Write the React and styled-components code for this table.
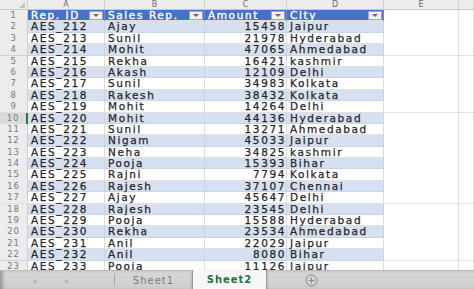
import React from "react";
import styled, { createGlobalStyle } from "styled-components";

const Global = createGlobalStyle`
  html, body { margin: 0; padding: 0; background: #fff; overflow: hidden; }
  * { box-sizing: border-box; }
`;

const rows = [
  ["AES_212", "Ajay", "15458", "Jaipur"],
  ["AES_213", "Sunil", "21978", "Hyderabad"],
  ["AES_214", "Mohit", "47065", "Ahmedabad"],
  ["AES_215", "Rekha", "16421", "kashmir"],
  ["AES_216", "Akash", "12109", "Delhi"],
  ["AES_217", "Sunil", "34983", "Kolkata"],
  ["AES_218", "Rakesh", "38432", "Kolkata"],
  ["AES_219", "Mohit", "14264", "Delhi"],
  ["AES_220", "Mohit", "44136", "Hyderabad"],
  ["AES_221", "Sunil", "13271", "Ahmedabad"],
  ["AES_222", "Nigam", "45033", "Jaipur"],
  ["AES_223", "Neha", "34825", "kashmir"],
  ["AES_224", "Pooja", "15393", "Bihar"],
  ["AES_225", "Rajni", "7794", "Kolkata"],
  ["AES_226", "Rajesh", "37107", "Chennai"],
  ["AES_227", "Ajay", "45647", "Delhi"],
  ["AES_228", "Rajesh", "23545", "Delhi"],
  ["AES_229", "Pooja", "15588", "Hyderabad"],
  ["AES_230", "Rekha", "23534", "Ahmedabad"],
  ["AES_231", "Anil", "22029", "Jaipur"],
  ["AES_232", "Anil", "8080", "Bihar"],
  ["AES_233", "Pooja", "11126", "Jaipur"],
];

const COLS = "28px 77px 100px 82px 97px 75px 1fr";

const Screen = styled.div`
  width: 474px;
  height: 289px;
  display: flex;
  flex-direction: column;
  font-family: "DejaVu Sans", "Liberation Sans", sans-serif;
  overflow: hidden;
`;

const Sheet = styled.div`
  flex: 1;
  overflow: hidden;
`;

const HeaderBar = styled.div`
  display: grid;
  grid-template-columns: ${COLS};
  height: 10px;
  background: #ececec;
  border-bottom: 1px solid #c8c8c8;
`;

const Corner = styled.div`
  border-right: 1px solid #cfcfcf;
  position: relative;
  &::after {
    content: "";
    position: absolute;
    right: 2px;
    bottom: 1px;
    border-left: 6px solid transparent;
    border-bottom: 6px solid #c4c4c4;
  }
`;

const ColHead = styled.div`
  border-right: 1px solid #d2d2d2;
  color: #6a6a6a;
  font-size: 8px;
  line-height: 9px;
  text-align: center;
`;

const Row = styled.div`
  display: grid;
  grid-template-columns: ${COLS};
  height: 11.4px;
  background: ${(p) => (p.$head ? "#4472c4" : p.$band ? "#d6e0f0" : "#fff")};
  border-bottom: 1px solid ${(p) => (p.$band ? "#c9d4e8" : "#e0e0e0")};
`;

const RowHead = styled.div`
  background: ${(p) => (p.$active ? "#dadada" : "#ececec")};
  border-right: ${(p) => (p.$active ? "2px solid #217346" : "1px solid #cfcfcf")};
  color: #7a7a7a;
  font-size: 8.5px;
  line-height: 10.4px;
  text-align: center;
  letter-spacing: 0.8px;
`;

const Cell = styled.div`
  border-right: 1px solid ${(p) => (p.$band ? "#c8d3e6" : "#dcdcdc")};
  color: #262626;
  font-size: 10.5px;
  line-height: 11.2px;
  letter-spacing: 1.6px;
  -webkit-text-stroke: 0.25px #262626;
  text-align: ${(p) => (p.$right ? "right" : "left")};
  padding: 0 0 0 3px;
  white-space: nowrap;
`;

const Blank = styled.div`
  background: #fff;
  border-right: 1px solid #dcdcdc;
  border-bottom: 1px solid #e0e0e0;
  margin-bottom: -1px;
`;

const HeadCell = styled.div`
  border-right: 1px solid #6b8fd0;
  color: #fff;
  font-size: 10.5px;
  line-height: 11px;
  letter-spacing: 1.6px;
  -webkit-text-stroke: 0.35px #fff;
  display: flex;
  align-items: center;
  justify-content: space-between;
  padding: 0 1px 0 3px;
  white-space: nowrap;
`;

const Drop = styled.span`
  width: 14px;
  height: 9px;
  background: #f2f2f2;
  border: 1px solid #9aa9c4;
  display: flex;
  align-items: center;
  justify-content: center;
  flex: none;
  margin-left: 2px;
  &::after {
    content: "";
    border-left: 3px solid transparent;
    border-right: 3px solid transparent;
    border-top: 3px solid #666;
  }
`;

const TabBar = styled.div`
  height: 19px;
  flex: none;
  background: linear-gradient(#d6d6d6, #cfcfcf);
  border-top: 1px solid #bdbdbd;
  display: flex;
  align-items: stretch;
  box-shadow: inset 4px 0 4px -2px rgba(0, 0, 0, 0.35);
`;

const Nav = styled.div`
  width: 115px;
  flex: none;
  display: flex;
  align-items: center;
  gap: 28px;
  padding-left: 32px;
  color: #b4b4b4;
  font-size: 6px;
  border-right: 1px solid #a8a8a8;
  margin: 3px 0;
`;

const Tab = styled.div`
  width: ${(p) => p.$w}px;
  flex: none;
  display: flex;
  align-items: center;
  justify-content: center;
  font-size: 10px;
  letter-spacing: 1px;
  font-weight: ${(p) => (p.$active ? 700 : 400)};
  color: ${(p) => (p.$active ? "#1e7145" : "#7c7c7c")};
  background: ${(p) => (p.$active ? "#f7f7f7" : "transparent")};
  border-right: 1px solid ${(p) => (p.$active ? "#9a9a9a" : "transparent")};
  border-left: 1px solid ${(p) => (p.$active ? "#9a9a9a" : "transparent")};
  margin-top: ${(p) => (p.$active ? "-1px" : "0")};
  box-shadow: ${(p) => (p.$active ? "0 1px 2px rgba(0,0,0,0.3)" : "none")};
`;

const AddBtn = styled.div`
  margin-left: 38px;
  display: flex;
  align-items: center;
`;

const headers = ["Rep. ID", "Sales Rep.", "Amount", "City"];
const letters = ["A", "B", "C", "D", "E", ""];

export default function App() {
  return (
    <>
      <Global />
      <Screen>
        <Sheet>
          <HeaderBar>
            <Corner />
            {letters.map((l, i) => (
              <ColHead key={i}>{l}</ColHead>
            ))}
          </HeaderBar>
          <Row $head>
            <RowHead>1</RowHead>
            {headers.map((h) => (
              <HeadCell key={h}>
                {h}
                <Drop />
              </HeadCell>
            ))}
            <Blank />
            <Blank />
          </Row>
          {rows.map((r, i) => {
            const n = i + 2;
            const band = i % 2 === 0;
            return (
              <Row key={n} $band={band}>
                <RowHead $active={n === 10}>{n}</RowHead>
                <Cell $band={band}>{r[0]}</Cell>
                <Cell $band={band}>{r[1]}</Cell>
                <Cell $band={band} $right>{r[2]}</Cell>
                <Cell $band={band}>{r[3]}</Cell>
                <Blank />
                <Blank />
              </Row>
            );
          })}
        </Sheet>
        <TabBar>
          <Nav>
            <span>◀</span>
            <span>▶</span>
          </Nav>
          <Tab $w={77}>Sheet1</Tab>
          <Tab $w={75} $active>Sheet2</Tab>
          <AddBtn>
            <svg width="13" height="13" viewBox="0 0 13 13">
              <circle cx="6.5" cy="6.5" r="5.5" fill="none" stroke="#8a8a8a" strokeWidth="1" />
              <path d="M6.5 3.5v6M3.5 6.5h6" stroke="#8a8a8a" strokeWidth="1" />
            </svg>
          </AddBtn>
        </TabBar>
      </Screen>
    </>
  );
}
